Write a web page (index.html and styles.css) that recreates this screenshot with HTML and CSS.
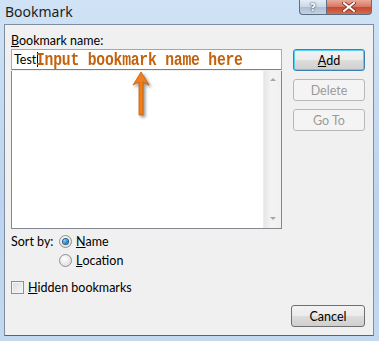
FILE: index.html
```
<!DOCTYPE html>
<html lang="en">
<head>
  <meta charset="UTF-8">
  <title>Bookmark</title>
  <link rel="stylesheet" href="styles.css">
</head>
<body>
  <div class="window">
    <div class="titlebar">
      <span class="title">Bookmark</span>
      <div class="caption-buttons">
        <span class="cap-btn help">?</span>
        <span class="cap-btn close">
          <svg width="14" height="10" viewBox="0 0 14 10">
            <path d="M2 1 L12 9 M12 1 L2 9" stroke="#7a2a1c" stroke-width="3.6" stroke-linecap="square"/>
            <path d="M2 1 L12 9 M12 1 L2 9" stroke="#ffffff" stroke-width="2" stroke-linecap="square"/>
          </svg>
        </span>
      </div>
    </div>

    <div class="client">
      <div class="main">
        <div class="left">
          <div class="field-label"><u>B</u>ookmark name:</div>
          <div class="name-input">Test<span class="caret"></span></div>
          <div class="listbox">
            <div class="scrollbar">
              <span class="sb-arrow up"></span>
              <span class="sb-arrow down"></span>
            </div>
          </div>
        </div>
        <div class="right">
          <button class="btn default"><u>A</u>dd</button>
          <button class="btn" disabled>Delete</button>
          <button class="btn" disabled>Go To</button>
        </div>
      </div>

      <div class="sort">
        <span class="sort-label">Sort by:</span>
        <div class="options">
          <div class="option"><span class="radio checked"></span><u>N</u>ame</div>
          <div class="option"><span class="radio"></span><u>L</u>ocation</div>
        </div>
      </div>

      <div class="option hidden-row"><span class="checkbox"></span><u>H</u>idden bookmarks</div>

      <div class="footer">
        <button class="btn">Cancel</button>
      </div>

      <!-- annotation laid over the dialog -->
      <div class="note">Input bookmark name here</div>
      <svg class="note-arrow" width="28" height="52" viewBox="0 0 28 52">
        <path d="M12 3 L20 16 L14 13 L14 46 L10 46 L10 13 L4 16 Z" fill="#f07e1c" stroke="#c45e0c" stroke-width="0.8"/>
      </svg>
    </div>
  </div>
</body>
</html>
```

FILE: styles.css
```
body {
  margin: 0;
  font-family: Lato, "Noto Sans", sans-serif;
  font-size: 12.5px;
  color: #000000;
}

.window {
  width: 379px;
  height: 341px;
  box-sizing: border-box;
  padding: 0 5px 5px 4px;
  display: flex;
  flex-direction: column;
  background: linear-gradient(#d0e2f5, #bcd4ee 60%, #c3d9f0);
}

.titlebar {
  height: 24px;
  display: flex;
  justify-content: space-between;
  align-items: flex-start;
}

.title {
  font-family: "Noto Sans", sans-serif;
  font-size: 14px;
  line-height: 14px;
  margin: 5px 0 0 1px;
  color: #1e1e1e;
}

.caption-buttons {
  display: flex;
  margin-right: 2px;
}

.cap-btn {
  height: 15px;
  box-sizing: border-box;
  border: 1px solid #5e6f83;
  border-top: none;
  display: flex;
  align-items: center;
  justify-content: center;
}

.help {
  width: 27px;
  border-right: none;
  border-radius: 0 0 0 4px;
  background: linear-gradient(#e5edf6, #c9d7e6 50%, #aebfd3 51%, #c2d3e6);
  color: #ffffff;
  font-family: "DejaVu Sans", sans-serif;
  font-weight: bold;
  font-size: 11px;
  line-height: 13px;
  text-shadow: 0 0 2px #33475e, 0 0 1px #33475e;
}

.close {
  width: 46px;
  border-radius: 0 0 4px 0;
  background: linear-gradient(#e9a99a, #d8755f 50%, #c54a32 51%, #d56a4e);
}

.client {
  position: relative;
  flex: 1;
  display: flex;
  flex-direction: column;
  padding: 8px 8px 8px 6px;
  background-color: #f0f0f0;
  border: 1px solid #7f8fa1;
  border-bottom-color: #566678;
}

.main {
  display: grid;
  grid-template-columns: 271px 72px;
  column-gap: 11px;
}

.field-label {
  line-height: 16px;
}

.name-input {
  height: 21px;
  box-sizing: border-box;
  padding-left: 2px;
  line-height: 19px;
  background: #ffffff;
  border: 1px solid #abadb3;
  border-top-color: #a3a6ad;
  border-bottom-color: #7c8088;
}

.caret {
  display: inline-block;
  width: 1px;
  height: 15px;
  margin-left: 1px;
  vertical-align: -3px;
  background: #000000;
}

.listbox {
  height: 158px;
  box-sizing: border-box;
  margin-top: 1px;
  background: #ffffff;
  border: 1px solid #828790;
  border-top: none;
  display: flex;
  justify-content: flex-end;
}

.scrollbar {
  width: 17px;
  background: linear-gradient(90deg, #e6e6e6, #f3f3f3 40%, #f0f0f0);
  border-left: 1px solid #ececec;
  display: flex;
  flex-direction: column;
  justify-content: space-between;
  align-items: center;
  padding: 7px 0 8px;
}

.sb-arrow {
  width: 0;
  height: 0;
  border-left: 3px solid transparent;
  border-right: 3px solid transparent;
}

.sb-arrow.up {
  border-bottom: 3px solid #a6a6a6;
}

.sb-arrow.down {
  border-top: 3px solid #a6a6a6;
}

.right {
  padding-top: 16px;
  display: flex;
  flex-direction: column;
  gap: 8px;
}

.btn {
  width: 72px;
  height: 22px;
  padding: 0;
  font-family: inherit;
  font-size: 12.5px;
  color: #000000;
  border: 1px solid #707070;
  border-radius: 3px;
  background: linear-gradient(#f2f2f2, #ebebeb 50%, #dddddd 51%, #cfcfcf);
}

.btn.default {
  border-color: #3c7fb1;
  box-shadow: inset 0 0 0 1px #5ad0f7;
}

.btn:disabled {
  color: #9a9a9a;
  border-color: #b5b9bc;
  background: #f4f4f4;
}

.sort {
  margin-top: 3px;
  display: flex;
}

.sort-label {
  width: 48px;
  line-height: 19px;
}

.option {
  height: 19px;
  display: flex;
  align-items: center;
}

.radio {
  width: 13px;
  height: 13px;
  box-sizing: border-box;
  margin-right: 4px;
  border-radius: 50%;
  border: 1px solid #8e8f8f;
  background: radial-gradient(circle at 40% 35%, #ffffff, #e2e2e2 70%, #cfcfcf);
  display: flex;
  align-items: center;
  justify-content: center;
}

.radio.checked::after {
  content: "";
  width: 5px;
  height: 5px;
  border-radius: 50%;
  background: radial-gradient(circle at 35% 35%, #8ad3f7, #1c6fb0 70%, #0d4d87);
  box-shadow: 0 0 0 1px #2a5c8a;
}

.hidden-row {
  margin-top: 8px;
}

.checkbox {
  width: 13px;
  height: 13px;
  box-sizing: border-box;
  margin-right: 4px;
  border: 1px solid #8e8f8f;
  background: linear-gradient(135deg, #dcdcdc, #f7f7f7);
  box-shadow: inset 0 0 0 1px #f4f4f4;
}

.footer {
  margin-top: auto;
  display: flex;
  justify-content: flex-end;
}

.footer .btn {
  width: 74px;
}

.note {
  position: absolute;
  left: 31px;
  top: 25px;
  font-family: "Liberation Mono", monospace;
  font-weight: bold;
  font-size: 14.7px;
  letter-spacing: -0.2px;
  line-height: 16px;
  color: #c2620d;
  transform: scaleY(1.25);
  transform-origin: left top;
}

.note-arrow {
  position: absolute;
  left: 124px;
  top: 44px;
  filter: drop-shadow(2px 2px 1.5px rgba(60, 60, 60, 0.55));
}
```
